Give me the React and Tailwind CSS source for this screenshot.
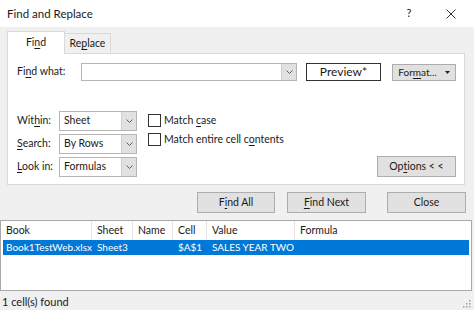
import React from "react";

const Chevron = () => (
  <svg width="7" height="4" viewBox="0 0 7 4" className="text-[#606060]">
    <polyline points="0.5,0.5 3.5,3.5 6.5,0.5" fill="none" stroke="currentColor" strokeWidth="1" />
  </svg>
);

// underlined access key
const U = ({ children }) => <span className="underline underline-offset-2">{children}</span>;

const Select = ({ value }) => (
  <div className="flex h-[20px] w-[78px] border border-[#b5b5b5] bg-white">
    <div className="flex-1 flex items-center pl-[4px]">{value}</div>
    <div className="w-[15px] bg-[#e1e1e1] border-l border-[#cfcfcf] flex items-center justify-center">
      <Chevron />
    </div>
  </div>
);

const Check = ({ children }) => (
  <div className="flex items-center gap-[3px] h-[17px] whitespace-nowrap">
    <div className="w-[13px] h-[13px] border border-[#333] bg-white" />
    <span>{children}</span>
  </div>
);

const Btn = ({ children, className = "" }) => (
  <div
    className={`flex items-center justify-center bg-[#e1e1e1] border border-[#adadad] whitespace-nowrap ${className}`}
  >
    {children}
  </div>
);

const cols = [
  { name: "Book", w: "w-[91px]" },
  { name: "Sheet", w: "w-[41px]" },
  { name: "Name", w: "w-[40px]" },
  { name: "Cell", w: "w-[34px]" },
  { name: "Value", w: "w-[88px]" },
  { name: "Formula", w: "flex-1" },
];

const row = ["Book1TestWeb.xlsx", "Sheet3", "", "$A$1", "SALES YEAR TWO", ""];

export default function App() {
  return (
    <div
      className="w-[474px] h-[310px] bg-[#f0f0f0] flex flex-col text-[10.5px] text-[#1a1a1a] overflow-hidden"
      style={{ fontFamily: "Lato, 'Noto Sans', sans-serif" }}
    >
      {/* Title bar */}
      <div className="h-[27px] bg-white flex items-center pl-[7px] shrink-0">
        <span className="flex-1 text-[11.5px]">Find and Replace</span>
        <span className="w-[10px] text-center mr-[32px] text-[11px]">?</span>
        <svg width="10" height="10" viewBox="0 0 10 10" className="mr-[18px]">
          <path d="M0.5 0.5 L9.5 9.5 M9.5 0.5 L0.5 9.5" stroke="#333" strokeWidth="1" />
        </svg>
      </div>

      {/* Tabs */}
      <div className="flex items-end h-[26px] pl-[7px] shrink-0">
        <div className="w-[58px] h-[23px] bg-white border border-b-0 border-[#d9d9d9] flex items-center justify-center -mb-px relative z-10">
          Fi<U>n</U>d
        </div>
        <div className="w-[46px] h-[20px] bg-[#f0f0f0] border border-l-0 border-b-0 border-[#d9d9d9] flex items-center justify-center">
          Re<U>p</U>lace
        </div>
      </div>

      {/* Panel */}
      <div className="ml-[7px] w-[458px] h-[132px] bg-white border border-[#d9d9d9] shrink-0 flex flex-col pl-[9px] pr-[8px] pt-[9px]">
        <div className="flex items-center h-[18px]">
          <span className="w-[64px] whitespace-nowrap">Fi<U>n</U>d what:</span>
          <div className="flex h-[18px] w-[216px] border border-[#b5b5b5]">
            <div className="flex-1" />
            <div className="w-[15px] bg-[#e1e1e1] border-l border-[#cfcfcf] flex items-center justify-center">
              <Chevron />
            </div>
          </div>
          <div className="ml-[9px] w-[75px] h-[18px] border border-[#333] flex items-center justify-center text-[12px]">
            Preview*
          </div>
          <Btn className="ml-[11px] w-[64px] h-[17px] gap-[8px] text-[10px]">
            <span>
              For<U>m</U>at...
            </span>
            <svg width="5" height="3" viewBox="0 0 5 3">
              <polygon points="0,0 5,0 2.5,3" fill="#222" />
            </svg>
          </Btn>
        </div>

        <div className="flex mt-[30px]">
          <div className="flex flex-col gap-[3px]">
            {[
              [<>Wit<U>h</U>in:</>, "Sheet"],
              [<><U>S</U>earch:</>, "By Rows"],
              [<><U>L</U>ook in:</>, "Formulas"],
            ].map(([label, value], i) => (
              <div key={i} className="flex items-center">
                <span className="w-[42px] whitespace-nowrap">{label}</span>
                <Select value={value} />
              </div>
            ))}
          </div>
          <div className="ml-[11px] flex flex-col gap-[2px] pt-[1px]">
            <Check>
              Match <U>c</U>ase
            </Check>
            <Check>
              Match entire cell c<U>o</U>ntents
            </Check>
          </div>
          <div className="flex-1 flex items-end justify-end">
            <Btn className="w-[79px] h-[21px]">
              Op<U>t</U>ions &lt; &lt;
            </Btn>
          </div>
        </div>
      </div>

      {/* Buttons */}
      <div className="flex h-[35px] items-center pl-[197px] shrink-0">
        <Btn className="w-[78px] h-[21px]">
          F<U>i</U>nd All
        </Btn>
        <Btn className="ml-[12px] w-[79px] h-[21px] border-[#0078d7]">
          <U>F</U>ind Next
        </Btn>
        <Btn className="ml-[21px] w-[79px] h-[21px]">Close</Btn>
      </div>

      {/* Results list */}
      <div className="w-[472px] h-[71px] bg-white border border-[#a8a8a8] shrink-0 flex flex-col">
        <div className="flex h-[19px] items-center">
          {cols.map((c, i) => (
            <div
              key={c.name}
              className={`${c.w} h-full flex items-center pl-[5px] ${i < cols.length - 1 ? "border-r border-[#e5e5e5]" : ""}`}
            >
              {c.name}
            </div>
          ))}
        </div>
        <div className="flex h-[15px] mx-[2px] bg-[#0078d7] text-white text-[10px]">
          {cols.map((c, i) => (
            <div
              key={c.name}
              className={`${i === 0 ? "w-[89px] pl-[3px]" : `${c.w} pl-[5px]`} flex items-center whitespace-nowrap`}
            >
              {row[i]}
            </div>
          ))}
        </div>
      </div>

      {/* Status */}
      <div className="flex-1 flex items-center justify-between pl-[2px] pr-[3px] pt-[3px] text-[11px]">
        <span>1 cell(s) found</span>
        <svg width="10" height="10" viewBox="0 0 10 10" className="self-end mb-[3px]">
          <rect x="8" y="2" width="1.5" height="1.5" fill="#a0a0a0" />
          <rect x="5" y="5" width="1.5" height="1.5" fill="#a0a0a0" />
          <rect x="8" y="5" width="1.5" height="1.5" fill="#a0a0a0" />
          <rect x="2" y="8" width="1.5" height="1.5" fill="#a0a0a0" />
          <rect x="5" y="8" width="1.5" height="1.5" fill="#a0a0a0" />
          <rect x="8" y="8" width="1.5" height="1.5" fill="#a0a0a0" />
        </svg>
      </div>
    </div>
  );
}
